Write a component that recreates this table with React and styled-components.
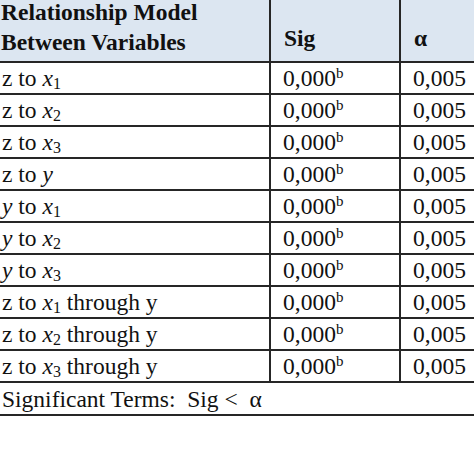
import React from 'react'
import styled, { createGlobalStyle } from 'styled-components'

const GlobalStyle = createGlobalStyle`
  html, body {
    margin: 0;
    padding: 0;
    background: #ffffff;
    overflow: hidden;
  }
`

const Frame = styled.div`
  width: 474px;
  height: 474px;
  overflow: hidden;
  background: #ffffff;
`

const Table = styled.table`
  margin-top: -14px;
  width: 530px;
  border-collapse: collapse;
  table-layout: fixed;
  font-family: "Liberation Serif", "Times New Roman", serif;
  font-size: 23.5px;
  color: #111111;
`

const HeadRow = styled.tr`
  height: 76px;
  background: #dce6f1;
`

const HeadCell = styled.th`
  text-align: left;
  font-weight: bold;
  line-height: 30px;
  vertical-align: bottom;
  padding: 0 0 ${p => p.$bottom || 4}px ${p => (p.$first ? 1 : 13)}px;
  border-bottom: 2px solid #262626;
  border-left: ${p => (p.$first ? 'none' : '2px solid #262626')};
`

const Row = styled.tr`
  height: ${p => p.$height || 32}px;
`

const Cell = styled.td`
  line-height: 26px;
  vertical-align: middle;
  white-space: nowrap;
  padding: 0 0 0 ${p => (p.$first ? 2 : 12)}px;
  border-bottom: 2px solid #262626;
  border-left: ${p => (p.$first ? 'none' : '2px solid #262626')};
`

const NoteCell = styled.td`
  line-height: 26px;
  padding: 0 0 0 2px;
  white-space: pre;
  border-bottom: 2px solid #262626;
`

const Var = styled.i`
  font-style: italic;
`

const Sub = styled.sub`
  font-size: 16px;
  line-height: 0;
  vertical-align: -3px;
`

const Sup = styled.sup`
  font-size: 15px;
  line-height: 0;
  vertical-align: 8px;
`

const Value = ({ mark }) => (
  <>
    0,000{mark && <Sup>{mark}</Sup>}
  </>
)

const X = ({ n }) => (
  <>
    <Var>x</Var>
    <Sub>{n}</Sub>
  </>
)

const rows = [
  <>z to <X n="1" /></>,
  <>z to <X n="2" /></>,
  <>z to <X n="3" /></>,
  <>z to <Var>y</Var></>,
  <><Var>y</Var> to <X n="1" /></>,
  <><Var>y</Var> to <X n="2" /></>,
  <><Var>y</Var> to <X n="3" /></>,
  <>z to <X n="1" /> through y</>,
  <>z to <X n="2" /> through y</>,
  <>z to <X n="3" /> through y</>,
]

export default function App() {
  return (
    <Frame>
      <GlobalStyle />
      <Table>
        <colgroup>
          <col style={{ width: 270 }} />
          <col style={{ width: 130 }} />
          <col style={{ width: 130 }} />
        </colgroup>
        <thead>
          <HeadRow>
            <HeadCell $first>
              Relationship Model
              <br />
              Between Variables
            </HeadCell>
            <HeadCell $bottom={8}>Sig</HeadCell>
            <HeadCell $bottom={8}>α</HeadCell>
          </HeadRow>
        </thead>
        <tbody>
          {rows.map((label, i) => (
            <Row key={i}>
              <Cell $first>{label}</Cell>
              <Cell><Value mark="b" /></Cell>
              <Cell>0,005</Cell>
            </Row>
          ))}
          <Row $height={33}>
            <NoteCell colSpan={3}>Significant Terms:  Sig &lt;  α</NoteCell>
          </Row>
        </tbody>
      </Table>
    </Frame>
  )
}
